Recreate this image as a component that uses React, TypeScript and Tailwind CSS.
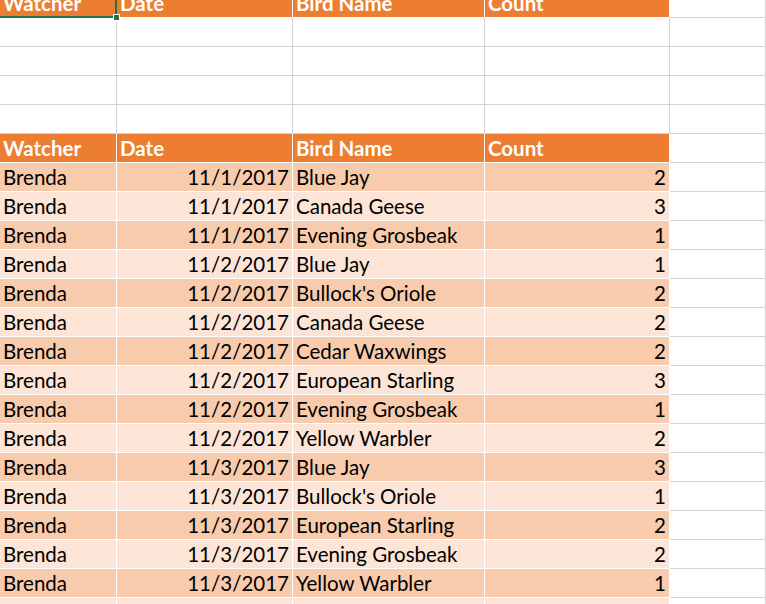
import React from 'react';

type Row = [string, string, string, number];

const rows: Row[] = [
  ['Brenda', '11/1/2017', 'Blue Jay', 2],
  ['Brenda', '11/1/2017', 'Canada Geese', 3],
  ['Brenda', '11/1/2017', 'Evening Grosbeak', 1],
  ['Brenda', '11/2/2017', 'Blue Jay', 1],
  ['Brenda', '11/2/2017', "Bullock's Oriole", 2],
  ['Brenda', '11/2/2017', 'Canada Geese', 2],
  ['Brenda', '11/2/2017', 'Cedar Waxwings', 2],
  ['Brenda', '11/2/2017', 'European Starling', 3],
  ['Brenda', '11/2/2017', 'Evening Grosbeak', 1],
  ['Brenda', '11/2/2017', 'Yellow Warbler', 2],
  ['Brenda', '11/3/2017', 'Blue Jay', 3],
  ['Brenda', '11/3/2017', "Bullock's Oriole", 1],
  ['Brenda', '11/3/2017', 'European Starling', 2],
  ['Brenda', '11/3/2017', 'Evening Grosbeak', 2],
  ['Brenda', '11/3/2017', 'Yellow Warbler', 1],
  ['Brenda', '11/4/2017', 'Blue Jay', 2],
];

const grid = 'grid grid-cols-[117px_176px_192px_185px_96px] h-[29px]';
const cell = 'h-[29px] border-r border-b overflow-hidden whitespace-nowrap leading-[29px] px-[3px]';
const plain = `${cell} border-[#d4d4d4] bg-white`;

function HeaderRow({ selected }: { selected?: boolean }) {
  const head = `${cell} border-white bg-[#ed7d31] text-white font-bold`;
  return (
    <div className={grid}>
      <div className={`${head} relative overflow-visible`}>
        Watcher
        {selected ? (
          <>
            <div className="absolute left-[-2px] top-[-2px] right-[-1px] bottom-[-1px] border-2 border-[#217346]" />
            <div className="absolute right-[-4px] bottom-[-4px] w-[7px] h-[7px] bg-[#217346] border border-white" />
          </>
        ) : null}
      </div>
      <div className={head}>Date</div>
      <div className={head}>Bird Name</div>
      <div className={head}>Count</div>
      <div className={plain} />
    </div>
  );
}

function EmptyRow() {
  return (
    <div className={grid}>
      <div className={plain} />
      <div className={plain} />
      <div className={plain} />
      <div className={plain} />
      <div className={plain} />
    </div>
  );
}

function DataRow({ row, dark }: { row: Row; dark: boolean }) {
  const bg = dark ? 'bg-[#f8cbad]' : 'bg-[#fce4d6]';
  const c = `${cell} border-white ${bg} text-black`;
  return (
    <div className={grid}>
      <div className={c}>{row[0]}</div>
      <div className={`${c} text-right`}>{row[1]}</div>
      <div className={c}>{row[2]}</div>
      <div className={`${c} text-right`}>{row[3]}</div>
      <div className={plain} />
    </div>
  );
}

export default function App() {
  return (
    <div
      className="w-[766px] h-[604px] overflow-hidden bg-white text-[20.5px]"
      style={{ fontFamily: 'Lato, "Open Sans", sans-serif' }}
    >
      <div className="-mt-[11px]">
        <HeaderRow selected />
        <EmptyRow />
        <EmptyRow />
        <EmptyRow />
        <EmptyRow />
        <HeaderRow />
        {rows.map((r, i) => (
          <DataRow key={i} row={r} dark={i % 2 === 0} />
        ))}
      </div>
    </div>
  );
}
